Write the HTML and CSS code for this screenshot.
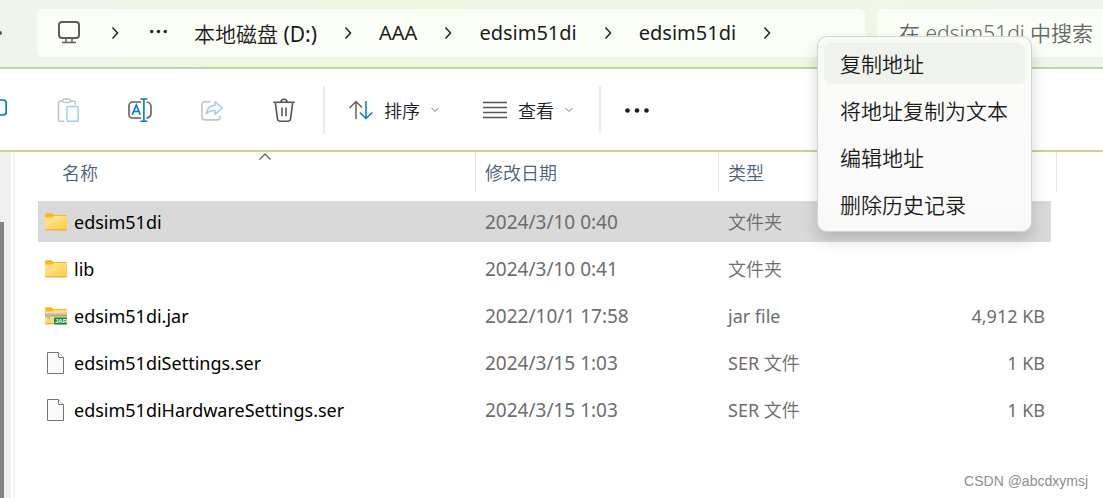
FILE: index.html
```html
<!DOCTYPE html>
<html lang="zh-CN">
<head>
    <meta charset="UTF-8">
    <meta name="viewport" content="width=device-width, initial-scale=1.0">
    <title>edsim51di</title>
    <link rel="stylesheet" href="styles.css">
</head>
<body>
    <!-- Address bar and search -->
    <header class="topbar">
        <svg class="edge-dot" width="3" height="8" viewBox="0 0 3 8"><circle cx="0" cy="4" r="2" fill="#555"/></svg>
        <nav class="address" aria-label="地址">
            <a class="crumb" href="#" aria-label="此电脑">
                <svg width="22" height="24" viewBox="0 0 22 24" fill="none" stroke="#5d5d5d" stroke-width="2">
                    <rect x="1" y="1" width="20" height="16" rx="3"/>
                    <path d="M8 17v4M14 17v4M4 21.500h14" stroke-width="1.500"/>
                </svg>
            </a>
            <svg class="chevron first" viewBox="0 0 7 14"><path d="M1 1.500l5 5.500-5 5.500"/></svg>
            <button class="crumb more" type="button" aria-label="更多">
                <svg width="17" height="8" viewBox="0 0 17 8" fill="#222"><circle cx="1.700" cy="2.500" r="1.700"/><circle cx="8.500" cy="2.500" r="1.700"/><circle cx="15.300" cy="2.500" r="1.700"/></svg>
            </button>
            <a class="crumb cn" href="#">本地磁盘 <span class="latin">(D:)</span></a>
            <svg class="chevron" viewBox="0 0 7 14"><path d="M1 1.500l5 5.500-5 5.500"/></svg>
            <a class="crumb" href="#">AAA</a>
            <svg class="chevron" viewBox="0 0 7 14"><path d="M1 1.500l5 5.500-5 5.500"/></svg>
            <a class="crumb" href="#">edsim51di</a>
            <svg class="chevron" viewBox="0 0 7 14"><path d="M1 1.500l5 5.500-5 5.500"/></svg>
            <a class="crumb" href="#">edsim51di</a>
            <svg class="chevron" viewBox="0 0 7 14"><path d="M1 1.500l5 5.500-5 5.500"/></svg>
        </nav>
        <input class="search" type="text" aria-label="搜索" placeholder="在 edsim51di 中搜索">
    </header>

    <!-- Toolbar -->
    <div class="toolbar">
        <div class="tools">
            <button type="button" aria-label="复制">
                <svg width="24" height="24" viewBox="0 0 24 24" fill="#fafafa" stroke="#0078d4" stroke-width="1.700"><rect x="8" y="2" width="14.200" height="15" rx="3"/></svg>
            </button>
            <button type="button" aria-label="粘贴">
                <svg width="24" height="24" viewBox="0 0 24 24" fill="none" stroke="#c3c3c3" stroke-width="1.500">
                    <path d="M8.500 23.300H3.500a1 1 0 0 1-1-1V4.200a1 1 0 0 1 1-1h3M15 3.200h3.200a1 1 0 0 1 1 1v2.500"/>
                    <rect x="6.700" y="1" width="7.800" height="3.400" rx="1.500"/>
                    <rect x="11" y="8.500" width="11.300" height="14.800" rx="1" fill="#fafafa" stroke="#a6cef0"/>
                </svg>
            </button>
            <button type="button" aria-label="重命名">
                <svg width="24" height="24" viewBox="0 0 24 24" fill="none" stroke="#616161" stroke-width="1.600">
                    <path d="M13 20H4.500a3.500 3.500 0 0 1-3.500-3.500v-9A3.500 3.500 0 0 1 4.500 4H13M18.500 4A4.500 4.500 0 0 1 23 8.500v7a4.500 4.500 0 0 1-4.500 4.500" fill="#fafafa"/>
                    <path d="M4.300 16.700L8.300 7l4 9.700M5.700 13.500h5.200M12.500 1h6.800M12.500 23.200h6.800M15.900 1v22.200" stroke="#0078d4"/>
                </svg>
            </button>
            <button type="button" aria-label="共享">
                <svg width="24" height="24" viewBox="0 0 24 24" fill="none" stroke="#c3c3c3" stroke-width="1.600">
                    <path d="M10.500 3.700H4.700A2.700 2.700 0 0 0 2 6.400v12.800a2.700 2.700 0 0 0 2.700 2.700h12.800a2.700 2.700 0 0 0 2.700-2.700v-1.500"/>
                    <path d="M15 3.700l7.300 6.300-7.300 6.300v-3.700c-3.700-.3-6.500.8-8.700 3 .5-5 3.300-8 8.700-8.400z" fill="#fafafa" stroke="#a6cef0" stroke-linejoin="round"/>
                </svg>
            </button>
            <button type="button" aria-label="删除">
                <svg width="24" height="24" viewBox="0 0 24 24" fill="none" stroke="#555" stroke-width="1.600">
                    <path d="M3.300 4.500L5.500 21.200a2.400 2.400 0 0 0 2.400 2h8.200a2.400 2.400 0 0 0 2.400-2L20.700 4.500" fill="#fafafa"/>
                    <path d="M1.200 4.200h21.600M9 4a3 2.800 0 0 1 6 0M10 9.500v8.700M14 9.500v8.700"/>
                </svg>
            </button>
        </div>
        <span class="divider"></span>
        <div class="menus">
            <button class="drop" type="button">
                <svg width="24" height="20" viewBox="0 0 24 20" fill="none" stroke-width="1.500">
                    <path d="M.5 8L7 1.500l6 6M7 1.500V19" stroke="#616161"/>
                    <path d="M17 1v17.500M10.800 12.500l6.200 6 6.300-6" stroke="#0078d4"/>
                </svg>
                <span>排序</span>
                <svg class="down" viewBox="0 0 8 6"><path d="M.5 1L4 4.500 7.500 1"/></svg>
            </button>
            <button class="drop" type="button">
                <svg width="24" height="20" viewBox="0 0 24 20" fill="none" stroke="#555" stroke-width="1.300"><path d="M0 2.500h24M0 7.500h24M0 12.500h24M0 17.500h24"/></svg>
                <span>查看</span>
                <svg class="down" viewBox="0 0 8 6"><path d="M.5 1L4 4.500 7.500 1"/></svg>
            </button>
        </div>
        <span class="divider"></span>
        <button class="dots" type="button" aria-label="查看更多">
            <svg width="24" height="6" viewBox="0 0 24 6" fill="#1b1b1b"><circle cx="2.500" cy="3.500" r="2.300"/><circle cx="12" cy="3.500" r="2.300"/><circle cx="21.500" cy="3.500" r="2.300"/></svg>
        </button>
    </div>

    <!-- File list -->
    <main class="content">
        <div class="side"><div class="thumb"></div></div>
        <div class="list">
            <table class="files">
                <colgroup>
                    <col class="col-name"><col class="col-date"><col class="col-type"><col class="col-size">
                </colgroup>
                <thead>
                    <tr>
                        <th class="name">
                            <button type="button">名称</button>
                            <svg class="sorted" width="12" height="7" viewBox="0 0 12 7" fill="none" stroke="#555" stroke-width="1.200"><path d="M.5 6.500L6 1l5.500 5.500"/></svg>
                        </th>
                        <th><button type="button">修改日期</button></th>
                        <th><button type="button">类型</button></th>
                        <th class="last"><button type="button">大小</button></th>
                    </tr>
                </thead>
                <tbody>
                    <tr class="selected">
                        <td class="name"><div><svg class="icon" viewBox="0 0 24 24"><use href="#folder"/></svg>edsim51di</div></td>
                        <td class="date">2024/3/10 0:40</td>
                        <td>文件夹</td>
                        <td class="size"></td>
                    </tr>
                    <tr>
                        <td class="name"><div><svg class="icon" viewBox="0 0 24 24"><use href="#folder"/></svg>lib</div></td>
                        <td class="date">2024/3/10 0:41</td>
                        <td>文件夹</td>
                        <td class="size"></td>
                    </tr>
                    <tr>
                        <td class="name"><div>
                            <svg class="icon" viewBox="0 0 24 24">
                                <use href="#folder"/>
                                <path d="M1 9.500h22v3H1z" fill="#aaa69a"/>
                                <path d="M1 9.500h22v1H1z" fill="#d8d3c0"/>
                                <path d="M3 10h3v5H3z" fill="#b5bcc6"/>
                                <rect x="10" y="13.500" width="13" height="7" rx="1" fill="#138a43"/>
                                <text class="badge" x="11" y="19">JAR</text>
                            </svg>edsim51di.jar</div></td>
                        <td class="date">2022/10/1 17:58</td>
                        <td><span class="latin">jar file</span></td>
                        <td class="size">4,912 KB</td>
                    </tr>
                    <tr>
                        <td class="name"><div><svg class="icon" viewBox="0 0 24 24"><use href="#page"/></svg>edsim51diSettings.ser</div></td>
                        <td class="date">2024/3/15 1:03</td>
                        <td><span class="latin">SER</span> 文件</td>
                        <td class="size">1 KB</td>
                    </tr>
                    <tr>
                        <td class="name"><div><svg class="icon" viewBox="0 0 24 24"><use href="#page"/></svg>edsim51diHardwareSettings.ser</div></td>
                        <td class="date">2024/3/15 1:03</td>
                        <td><span class="latin">SER</span> 文件</td>
                        <td class="size">1 KB</td>
                    </tr>
                </tbody>
            </table>
        </div>
    </main>

    <!-- Address context menu -->
    <div class="context-menu">
        <button class="active" type="button">复制地址</button>
        <button type="button">将地址复制为文本</button>
        <button type="button">编辑地址</button>
        <button type="button">删除历史记录</button>
    </div>

    <div class="credit">CSDN @abcdxymsj</div>

    <!-- Shared icons -->
    <svg class="defs" aria-hidden="true">
        <defs>
            <linearGradient id="gold" x1="0" y1="0" x2="1" y2="1">
                <stop offset="0" stop-color="#ffe8a0"/>
                <stop offset="1" stop-color="#ffcb3d"/>
            </linearGradient>
        </defs>
        <symbol id="folder" viewBox="0 0 24 24">
            <path d="M1 4.500a1.200 1.200 0 0 1 1.200-1.200h5.600L9.500 5H22a1 1 0 0 1 1 1v4H1z" fill="#fab81a"/>
            <path d="M1 7.500h7.500L10 6h13v13.500a.8.8 0 0 1-.8.8H1.800a.8.800 0 0 1-.8-.8z" fill="url(#gold)"/>
            <path d="M1.300 19.800h21.400" stroke="#e5a52a" stroke-width="1"/>
        </symbol>
        <symbol id="page" viewBox="0 0 24 24">
            <path d="M3.500 1.500h11l5 5v16h-16z" fill="#fafafa" stroke="#757575"/>
            <path d="M14.500 1.500v5h5" fill="#fff" stroke="#757575"/>
        </symbol>
    </svg>
</body>
</html>
```
FILE: styles.css
```css
* {
    box-sizing: border-box;
}

body {
    margin: 0;
    min-height: 100vh;
    display: flex;
    flex-direction: column;
    position: relative;
    overflow: hidden;
    background-color: #fff;
    color: #1b1b1b;
    font-family: "Noto Sans", "Noto Sans CJK SC", sans-serif;
    font-size: 18px;
}

button {
    margin: 0;
    padding: 0;
    border: none;
    background: none;
    color: inherit;
    font: inherit;
    display: flex;
    align-items: center;
}

svg {
    display: block;
    flex: none;
}

.defs {
    position: absolute;
    width: 0;
    height: 0;
}

.latin {
    font-weight: 400;
}

/* Address bar */
.topbar {
    display: flex;
    align-items: center;
    height: 69px;
    padding-bottom: 2px;
    background: linear-gradient(90deg, #eff5ec, #eff7e1 30%, #eff7e3 75%, #eef5ec);
    border-bottom: 2px solid #c2d69b;
}

.edge-dot {
    margin-right: 34px;
}

.address {
    flex: 1;
    display: flex;
    align-items: center;
    gap: 27px;
    height: 48px;
    margin-right: 12px;
    padding-left: 21px;
    border-radius: 6px;
    background-color: #fbfef7;
    white-space: nowrap;
}

.crumb {
    color: #1b1b1b;
    font-size: 20px;
    text-decoration: none;
}

.crumb.cn {
    font-size: 21px;
    font-weight: 350;
}

.crumb.more {
    margin-left: 4px;
}

.chevron {
    width: 8px;
    height: 14px;
    fill: none;
    stroke: #222;
    stroke-width: 1.5;
}

.chevron.first {
    margin-left: 4px;
}

.search {
    width: 226px;
    height: 48px;
    padding: 0 0 0 22px;
    border: none;
    border-radius: 6px 0 0 6px;
    background-color: #fbfef7;
    color: #1b1b1b;
    font-family: inherit;
    font-size: 21px;
    font-weight: 350;
}

.search::placeholder {
    color: #666;
    opacity: 1;
}

/* Toolbar */
.toolbar {
    display: flex;
    align-items: center;
    height: 83px;
    margin-left: -16px;
    border-bottom: 2px solid #c2d69b;
}

.tools {
    display: flex;
    gap: 48px;
    margin-right: 27px;
}

.divider {
    width: 2px;
    height: 48px;
    background-color: #ececec;
}

.menus {
    display: flex;
    gap: 44px;
    margin: 0 26px 0 24px;
}

.drop span {
    margin: 0 11px;
    font-weight: 350;
}

.down {
    width: 8px;
    height: 6px;
    fill: none;
    stroke: #777;
}

.dots {
    margin-left: 24px;
}

/* File list */
.content {
    flex: 1;
    display: flex;
}

.side {
    width: 15px;
    padding-top: 70px;
    display: flex;
    background: linear-gradient(90deg, #f0f0f0 11px, #fff 11px, #fff 13px, #f5f5f5 13px);
}

.thumb {
    width: 4px;
    background-color: #858585;
}

.list {
    flex: 1;
    padding: 0 52px 0 23px;
}

.files {
    width: 100%;
    table-layout: fixed;
    border-collapse: separate;
    border-spacing: 0;
    color: #6d6d6d;
    font-weight: 350;
}

.col-name {
    width: 438px;
}

.col-date {
    width: 243px;
}

.col-size {
    width: 120px;
}

.files th {
    position: relative;
    padding: 0 0 9px;
    color: #4c607a;
    font-weight: 350;
}

.files th button {
    width: 100%;
    height: 40px;
    padding-left: 9px;
    border-right: 1px solid #e2e2e2;
}

.files th.name button {
    padding-left: 24px;
}

/* the last heading runs past the end of the rows */
.files th.last button {
    width: calc(100% + 6px);
}

.sorted {
    position: absolute;
    top: 1px;
    left: calc(50% + 2px);
}

.files td {
    height: 47px;
    padding: 0 0 0 9px;
    border-bottom: 6px solid transparent;
    background-clip: padding-box;
    line-height: 24px;
}

.files td.name {
    padding-left: 6px;
    color: #000;
    font-weight: 400;
}

.files td.name div {
    display: flex;
    align-items: center;
    gap: 6px;
}

.files td.date {
    font-size: 19px;
    font-weight: 400;
}

.files td.size {
    padding: 0 6px 0 0;
    font-weight: 400;
    text-align: right;
}

.selected td {
    background-color: #d9d9d9;
}

.icon {
    width: 24px;
    height: 24px;
}

.badge {
    fill: #fff;
    font-family: "Liberation Sans", sans-serif;
    font-size: 6px;
    font-weight: bold;
}

/* Context menu */
.context-menu {
    position: absolute;
    top: 36px;
    right: 71px;
    display: flex;
    flex-direction: column;
    gap: 6px;
    width: 215px;
    padding: 6px;
    border: 1px solid #d2d5cf;
    border-radius: 10px;
    background: linear-gradient(#f8fbf4, #fbfbfb 50%, #f9f9f9);
    box-shadow: 0 8px 16px rgba(0, 0, 0, 0.16);
}

.context-menu button {
    height: 41px;
    padding: 0 0 2px 16px;
    border-radius: 6px;
    font-size: 21px;
    font-weight: 350;
    white-space: nowrap;
}

.context-menu .active {
    background-color: #f0f2ed;
}

.credit {
    position: absolute;
    right: 15px;
    bottom: 9px;
    color: #8e8e8e;
    font-family: "Liberation Sans", sans-serif;
    font-size: 14px;
}
```
